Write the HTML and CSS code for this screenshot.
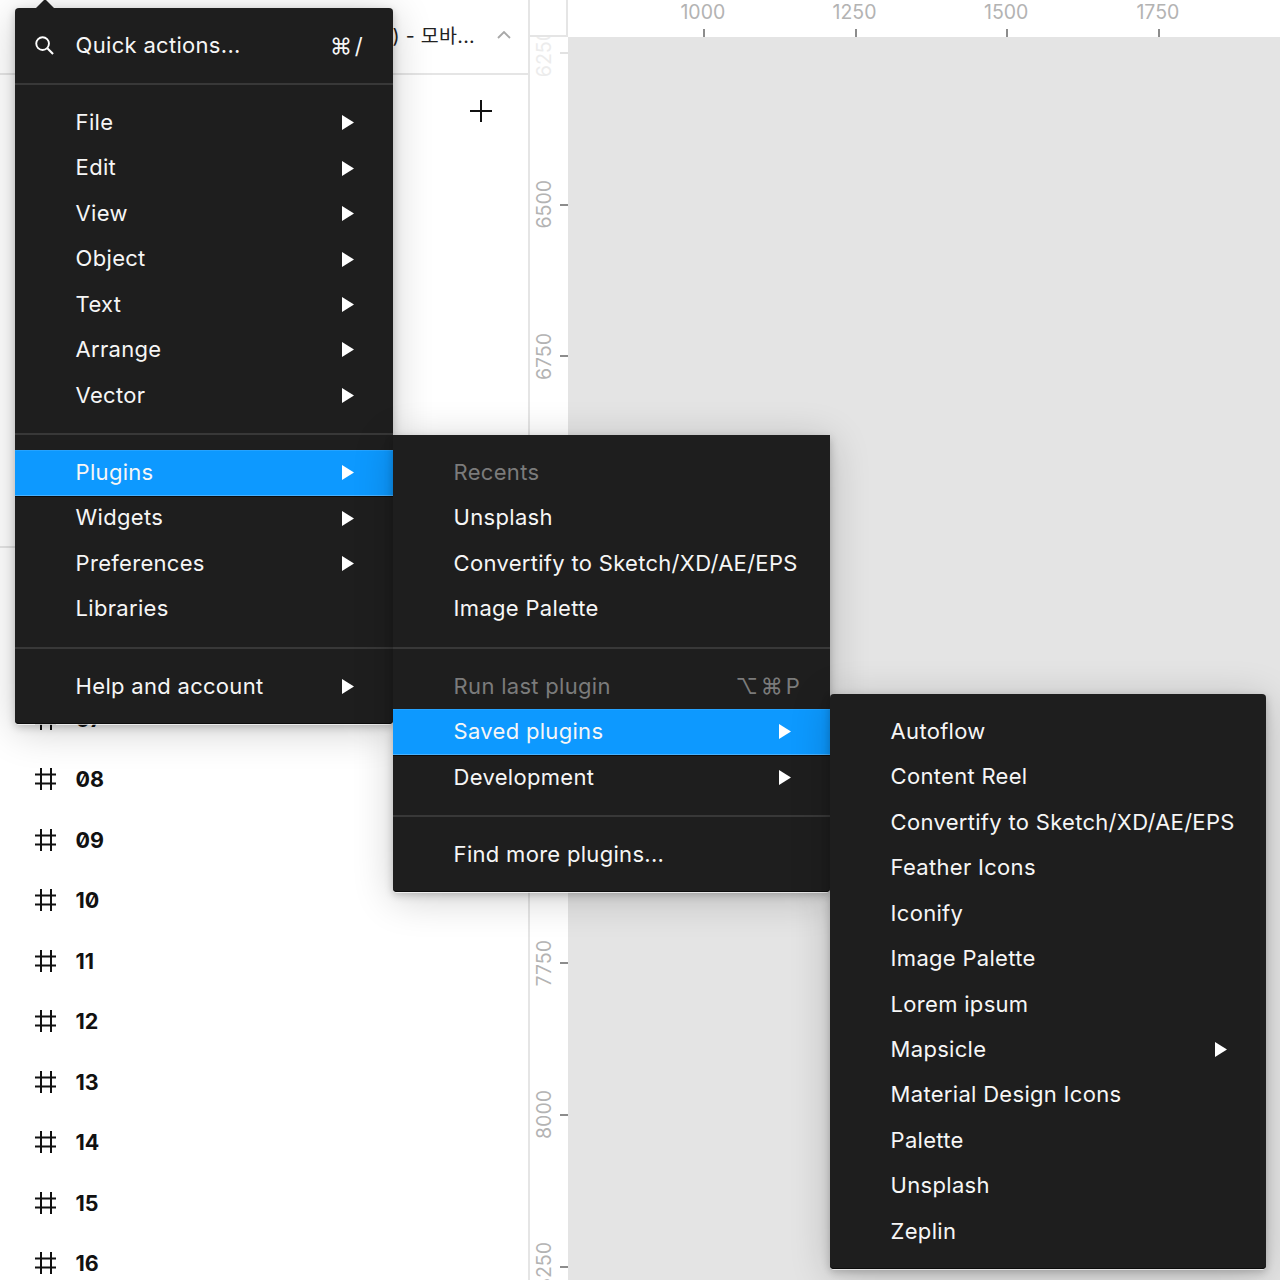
FILE: index.html
```html
<!DOCTYPE html>
<html lang="en">
<head>
<meta charset="utf-8">
<title>Plugins menu</title>
<link rel="stylesheet" href="styles.css">
</head>
<body>
<svg class="defs" width="0" height="0" aria-hidden="true">
  <symbol id="arrow" viewBox="0 0 12 15"><path d="M0 0L12 7.5L0 15Z" fill="#fff"/></symbol>
  <symbol id="frame" viewBox="0 0 21 22"><path d="M6 0V22M16 0V22M0 6.5H21M0 15.5H21" fill="none" stroke="#111" stroke-width="2"/></symbol>
</svg>
<div class="app">
  <aside class="sidebar">
    <header class="file-head">
      <span class="file-name">) - 모바...</span>
      <svg class="chev" viewBox="0 0 14 8"><path d="M1 7L7 1L13 7" fill="none" stroke="#a8a8a8" stroke-width="1.8"/></svg>
    </header>
    <section class="pages">
      <svg class="plus" viewBox="0 0 22 22"><path d="M11 0V22M0 11H22" fill="none" stroke="#111" stroke-width="2"/></svg>
    </section>
    <section class="layers">
      <div class="layer"><svg class="hash"><use href="#frame"/></svg><span>07</span></div>
      <div class="layer"><svg class="hash"><use href="#frame"/></svg><span>08</span></div>
      <div class="layer"><svg class="hash"><use href="#frame"/></svg><span>09</span></div>
      <div class="layer"><svg class="hash"><use href="#frame"/></svg><span>10</span></div>
      <div class="layer"><svg class="hash"><use href="#frame"/></svg><span>11</span></div>
      <div class="layer"><svg class="hash"><use href="#frame"/></svg><span>12</span></div>
      <div class="layer"><svg class="hash"><use href="#frame"/></svg><span>13</span></div>
      <div class="layer"><svg class="hash"><use href="#frame"/></svg><span>14</span></div>
      <div class="layer"><svg class="hash"><use href="#frame"/></svg><span>15</span></div>
      <div class="layer"><svg class="hash"><use href="#frame"/></svg><span>16</span></div>
    </section>
  </aside>
  <main class="stage">
    <div class="top-row">
      <div class="corner"></div>
      <div class="h-ruler">
        <div class="h-mark"><span>1000</span><i></i></div>
        <div class="h-mark"><span>1250</span><i></i></div>
        <div class="h-mark"><span>1500</span><i></i></div>
        <div class="h-mark"><span>1750</span><i></i></div>
      </div>
    </div>
    <div class="bottom-row">
      <div class="v-ruler">
        <div class="v-mark faint"><span>6250</span><i></i></div>
        <div class="v-mark"><span>6500</span><i></i></div>
        <div class="v-mark"><span>6750</span><i></i></div>
        <div class="v-mark"><span>7000</span><i></i></div>
        <div class="v-mark"><span>7250</span><i></i></div>
        <div class="v-mark"><span>7500</span><i></i></div>
        <div class="v-mark"><span>7750</span><i></i></div>
        <div class="v-mark"><span>8000</span><i></i></div>
        <div class="v-mark"><span>8250</span><i></i></div>
      </div>
      <div class="canvas"></div>
    </div>
  </main>
</div>

<nav class="menu menu-main">
  <svg class="caret" viewBox="0 0 18 9"><path d="M0 9L9 0L18 9Z" fill="#1e1e1e"/></svg>
  <div class="search-row">
    <svg class="search" viewBox="0 0 20 20"><circle cx="8" cy="8" r="6.7" fill="none" stroke="#fff" stroke-width="2"/><path d="M13 13L19 19" stroke="#fff" stroke-width="2.2"/></svg>
    <span class="label">Quick actions...</span>
    <span class="short">⌘ /</span>
  </div>
  <div class="group sep">
    <div class="row"><span class="label">File</span><svg class="arrow"><use href="#arrow"/></svg></div>
    <div class="row"><span class="label">Edit</span><svg class="arrow"><use href="#arrow"/></svg></div>
    <div class="row"><span class="label">View</span><svg class="arrow"><use href="#arrow"/></svg></div>
    <div class="row"><span class="label">Object</span><svg class="arrow"><use href="#arrow"/></svg></div>
    <div class="row"><span class="label">Text</span><svg class="arrow"><use href="#arrow"/></svg></div>
    <div class="row"><span class="label">Arrange</span><svg class="arrow"><use href="#arrow"/></svg></div>
    <div class="row"><span class="label">Vector</span><svg class="arrow"><use href="#arrow"/></svg></div>
  </div>
  <div class="group sep">
    <div class="row active"><span class="label">Plugins</span><svg class="arrow"><use href="#arrow"/></svg></div>
    <div class="row"><span class="label">Widgets</span><svg class="arrow"><use href="#arrow"/></svg></div>
    <div class="row"><span class="label">Preferences</span><svg class="arrow"><use href="#arrow"/></svg></div>
    <div class="row"><span class="label">Libraries</span></div>
  </div>
  <div class="group sep">
    <div class="row"><span class="label">Help and account</span><svg class="arrow"><use href="#arrow"/></svg></div>
  </div>
</nav>

<nav class="menu menu-plugins">
  <div class="group">
    <div class="row dim"><span class="label">Recents</span></div>
    <div class="row"><span class="label">Unsplash</span></div>
    <div class="row"><span class="label">Convertify to Sketch/XD/AE/EPS</span></div>
    <div class="row"><span class="label">Image Palette</span></div>
  </div>
  <div class="group sep">
    <div class="row dim"><span class="label">Run last plugin</span><span class="short">⌥ ⌘ P</span></div>
    <div class="row active"><span class="label">Saved plugins</span><svg class="arrow"><use href="#arrow"/></svg></div>
    <div class="row"><span class="label">Development</span><svg class="arrow"><use href="#arrow"/></svg></div>
  </div>
  <div class="group sep">
    <div class="row"><span class="label">Find more plugins...</span></div>
  </div>
</nav>

<nav class="menu menu-saved">
  <div class="group">
    <div class="row"><span class="label">Autoflow</span></div>
    <div class="row"><span class="label">Content Reel</span></div>
    <div class="row"><span class="label">Convertify to Sketch/XD/AE/EPS</span></div>
    <div class="row"><span class="label">Feather Icons</span></div>
    <div class="row"><span class="label">Iconify</span></div>
    <div class="row"><span class="label">Image Palette</span></div>
    <div class="row"><span class="label">Lorem ipsum</span></div>
    <div class="row"><span class="label">Mapsicle</span><svg class="arrow"><use href="#arrow"/></svg></div>
    <div class="row"><span class="label">Material Design Icons</span></div>
    <div class="row"><span class="label">Palette</span></div>
    <div class="row"><span class="label">Unsplash</span></div>
    <div class="row"><span class="label">Zeplin</span></div>
  </div>
</nav>
</body>
</html>
```
FILE: styles.css
```css
* { box-sizing: border-box; }
html, body { margin: 0; padding: 0; }
body {
  width: 1280px;
  height: 1280px;
  overflow: hidden;
  position: relative;
  background: #fff;
  font-family: Inter, "Noto Sans CJK KR", sans-serif;
}
.defs { position: absolute; }
.app { display: flex; width: 1280px; height: 1280px; }

/* left panel */
.sidebar {
  width: 530px;
  flex: none;
  display: flex;
  flex-direction: column;
  border-right: 2px solid #e5e5e5;
  background: #fff;
}
.file-head {
  height: 75px;
  flex: none;
  border-bottom: 2px solid #e5e5e5;
  display: flex;
  align-items: center;
  justify-content: flex-end;
  padding: 0 17px 4px 0;
}
.file-name { font-size: 19.5px; letter-spacing: .3px; color: #222; margin-right: 22px; white-space: nowrap; }
.chev { width: 14px; height: 8px; }
.pages {
  height: 473px;
  flex: none;
  border-bottom: 2px solid #e5e5e5;
  display: flex;
  justify-content: flex-end;
  align-items: flex-start;
  padding: 24.5px 36px 0 0;
}
.plus { width: 22px; height: 22px; }
.layers { padding-top: 140.25px; }
.layer {
  height: 60.5px;
  display: flex;
  align-items: center;
  padding-left: 35px;
  gap: 19.5px;
  font-size: 21.5px;
  font-weight: 700;
  color: #111;
  font-feature-settings: "zero";
}
.hash { width: 21px; height: 22px; flex: none; }

/* rulers */
.stage { flex: 1; min-width: 0; display: flex; flex-direction: column; }
.top-row { display: flex; height: 37px; flex: none; }
.corner { width: 38px; flex: none; border-bottom: 2px solid #e5e5e5; border-right: 2px solid #e5e5e5; }
.h-ruler { flex: 1; display: flex; padding-left: 60px; overflow: hidden; }
.h-mark {
  width: 151.7px;
  flex: none;
  height: 37px;
  display: flex;
  flex-direction: column;
  align-items: center;
  justify-content: space-between;
  font-size: 19.5px;
  line-height: 24px;
  color: #b3b3b3;
}
.h-mark span { margin-right: 2px; }
.h-mark i { width: 2px; height: 8px; background: #8c8c8c; }
.bottom-row { flex: 1; min-height: 0; display: flex; }
.v-ruler { width: 38px; flex: none; overflow: hidden; }
.v-mark {
  height: 151.7px;
  display: flex;
  align-items: center;
  justify-content: space-between;
  font-size: 19.5px;
  color: #b3b3b3;
  padding-left: 2px;
}
.v-mark:first-child { margin-top: -59.85px; }
.v-mark span { writing-mode: vertical-rl; transform: rotate(180deg); line-height: 24px; }
.v-mark i { width: 8px; height: 2px; background: #8c8c8c; }
.faint { color: #ececec; }
.faint i { background: #e2e2e2; }
.canvas { flex: 1; background: #e4e4e4; }

/* menus */
.menu {
  position: absolute;
  background: #1e1e1e;
  border-radius: 4px;
  color: #f6f6f6;
  box-shadow: inset 0 -1px 0 #0c0c0c, 0 2px 0 -1px rgba(255,255,255,.7), 0 3px 9px rgba(0,0,0,.22), 0 6px 40px rgba(0,0,0,.2);
  font-size: 22px;
  letter-spacing: .3px;
}
.menu-main { left: 15px; top: 8px; width: 378px; height: 716px; }
.menu-plugins { left: 393px; top: 435px; width: 437px; height: 457px; border-radius: 0 0 4px 4px; }
.menu-saved { left: 830px; top: 694px; width: 436px; height: 575px; }
.caret { position: absolute; left: 21px; top: -9px; width: 18px; height: 9px; }
.search-row {
  height: 75px;
  display: flex;
  align-items: center;
  padding: 0 30px 0 20px;
}
.search { width: 19px; height: 19px; margin-right: 22px; flex: none; }
.search-row .short { margin-left: auto; }
.label { margin-bottom: 1.5px; margin-left: -.4px; }
.group { padding: 15px 0; }
.sep { border-top: 2px solid #383838; }
.row {
  height: 45.45px;
  display: flex;
  align-items: center;
  justify-content: space-between;
  padding: 0 39px 0 61px;
  white-space: nowrap;
}
.row .arrow { width: 12px; height: 15px; flex: none; }
.row.active { background: #0d99ff; box-shadow: inset 0 1px 0 rgba(255,255,255,.1), inset 0 -1px 0 rgba(255,255,255,.25), 0 1px 0 #0c0c0c; }
.row.dim { color: #7b7b7b; }
.row .short { margin-right: -9px; margin-bottom: 1.5px; }
.short { white-space: pre; word-spacing: -4px; }
```
